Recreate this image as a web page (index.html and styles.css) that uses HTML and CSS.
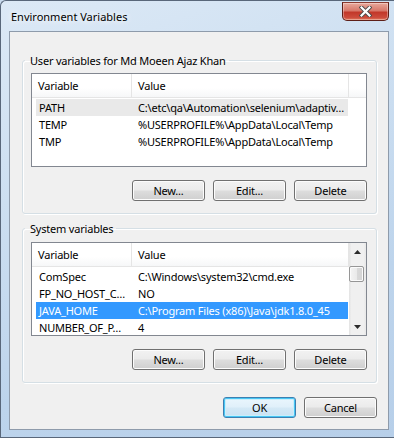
FILE: index.html
```html
<!DOCTYPE html>
<html lang="en">
<head>
<meta charset="UTF-8" />
<title>Environment Variables</title>
<link rel="stylesheet" href="styles.css">
</head>
<body>
<div class="window">
  <!-- Title bar -->
  <div class="titlebar">
    <span class="title">Environment Variables</span>
    <button class="close" title="Close">
      <svg width="13" height="11" viewBox="0 0 13 11">
        <path d="M2.5 1.5 L10.5 9.5 M10.5 1.5 L2.5 9.5" stroke="#4a4a4a" stroke-width="4" stroke-linecap="square"/>
        <path d="M2.5 1.5 L10.5 9.5 M10.5 1.5 L2.5 9.5" stroke="#ffffff" stroke-width="2.2" stroke-linecap="square"/>
      </svg>
    </button>
  </div>

  <!-- Client area -->
  <div class="client">
    <fieldset class="group group-user">
      <legend>User variables for Md Moeen Ajaz Khan</legend>
      <div class="list">
        <div class="list-main">
          <div class="list-head">
            <span class="head-var">Variable</span>
            <span class="head-val">Value</span>
          </div>
          <div class="rows">
            <div class="row hover"><span class="cell-var">PATH</span><span class="cell-val">C:\etc\qa\Automation\selenium\adaptiv…</span></div>
            <div class="row"><span class="cell-var">TEMP</span><span class="cell-val">%USERPROFILE%\AppData\Local\Temp</span></div>
            <div class="row"><span class="cell-var">TMP</span><span class="cell-val">%USERPROFILE%\AppData\Local\Temp</span></div>
          </div>
        </div>
      </div>
      <div class="buttons">
        <button class="btn">New...</button>
        <button class="btn">Edit...</button>
        <button class="btn">Delete</button>
      </div>
    </fieldset>

    <fieldset class="group group-system">
      <legend>System variables</legend>
      <div class="list">
        <div class="list-main">
          <div class="list-head">
            <span class="head-var">Variable</span>
            <span class="head-val">Value</span>
          </div>
          <div class="rows">
            <div class="row"><span class="cell-var">ComSpec</span><span class="cell-val">C:\Windows\system32\cmd.exe</span></div>
            <div class="row"><span class="cell-var">FP_NO_HOST_C…</span><span class="cell-val">NO</span></div>
            <div class="row selected"><span class="cell-var">JAVA_HOME</span><span class="cell-val">C:\Program Files (x86)\Java\jdk1.8.0_45</span></div>
            <div class="row"><span class="cell-var">NUMBER_OF_P…</span><span class="cell-val">4</span></div>
          </div>
        </div>
        <div class="scrollbar">
          <div class="arrow">
            <svg width="7" height="4" viewBox="0 0 7 4"><path d="M3.5 0 L7 4 L0 4 Z" fill="#2b2b2b"/></svg>
          </div>
          <div class="track">
            <div class="thumb"></div>
          </div>
          <div class="arrow">
            <svg width="7" height="4" viewBox="0 0 7 4"><path d="M0 0 L7 0 L3.5 4 Z" fill="#2b2b2b"/></svg>
          </div>
        </div>
      </div>
      <div class="buttons">
        <button class="btn">New...</button>
        <button class="btn">Edit...</button>
        <button class="btn">Delete</button>
      </div>
    </fieldset>

    <div class="dialog-buttons">
      <button class="btn default">OK</button>
      <button class="btn">Cancel</button>
    </div>
  </div>
</div>
</body>
</html>
```

FILE: styles.css
```css
body {
  margin: 0;
  font-family: "Noto Sans", sans-serif;
  font-size: 11px;
  letter-spacing: -0.2px;
  color: #000;
  background: #c9dbee;
}
.window {
  width: 394px;
  height: 438px;
  box-sizing: border-box;
  border: 1px solid #59677a;
  border-right: none;
  border-radius: 6px 0 0 0;
  padding: 0 5px 7px 8px;
  background: linear-gradient(160deg, #dce9f6 0%, #cddff1 35%, #bdd4ec 70%, #b7cfe9 100%);
}
.titlebar {
  height: 30px;
  display: flex;
  justify-content: space-between;
  align-items: flex-start;
}
.title {
  margin: 8px 0 0 2px;
  line-height: 15px;
  letter-spacing: 0;
  text-shadow: 0 0 6px #fff, 0 0 10px rgba(255,255,255,0.8);
}
.close {
  width: 47px;
  height: 19px;
  margin-top: 1px;
  padding: 0;
  border: 1px solid #5d1f18;
  border-top-color: #8a3a30;
  border-radius: 0 0 5px 5px;
  background: linear-gradient(#e9a99c 0%, #d7786a 45%, #c2382a 55%, #cc4b3c 85%, #e07a5c 100%);
  box-shadow: inset 0 0 0 1px rgba(255,255,255,0.35);
  display: flex;
  align-items: center;
  justify-content: center;
}
.close svg {
  display: block;
}
.client {
  height: 399px;
  box-sizing: border-box;
  border: 1px solid #8e9bab;
  background: #f0f0f0;
  padding: 0 11px 0 12px;
}

/* group boxes */
.group {
  margin: 0;
  border: 1px solid #d5dfe5;
  border-radius: 3px;
  box-shadow: inset 1px 1px 0 #fff, 1px 1px 0 #fff;
  padding: 5px 9px 12px 8px;
  width: 355px;
  box-sizing: border-box;
}
.group legend {
  padding: 0 3px 0 5px;
  margin-left: -6px;
  line-height: 15px;
}
.group-user {
  margin-top: 21px;
}
.group-system {
  margin-top: 7px;
  padding-top: 6px;
}

/* list views */
.list {
  height: 94px;
  box-sizing: border-box;
  border: 1px solid #828790;
  background: #fff;
  display: flex;
  overflow: hidden;
}
.list-main {
  flex: 1;
}
.list-head {
  display: flex;
  height: 23px;
  border-bottom: 1px solid #e5e5e5;
  background: linear-gradient(#fff 0%, #fff 60%, #f6f7f8 100%);
  line-height: 23px;
}
.head-var, .head-val {
  box-sizing: border-box;
  padding-left: 6px;
  border-right: 1px solid #e5e5e5;
}
.head-var {
  width: 100px;
}
.head-val {
  width: 217px;
}
.rows {
  padding-top: 1px;
}
.row {
  display: flex;
  width: 312px;
  height: 17px;
  margin-left: 4px;
  line-height: 17px;
  white-space: nowrap;
}
.row.hover {
  background: #e9e9e9;
}
.row.selected {
  background: #3399ff;
  color: #fff;
}
.cell-var {
  width: 96px;
  padding-left: 3px;
  box-sizing: border-box;
}
.cell-val {
  padding-left: 6px;
}

/* scrollbar */
.scrollbar {
  width: 17px;
  display: flex;
  flex-direction: column;
  background: linear-gradient(90deg, #e3e3e3 0%, #f0f0f0 15%, #f0f0f0 85%, #e8e8e8 100%);
}
.arrow {
  height: 17px;
  display: flex;
  align-items: center;
  justify-content: center;
}
.arrow svg {
  display: block;
}
.track {
  flex: 1;
}
.thumb {
  width: 15px;
  height: 16px;
  margin-top: 6px;
  box-sizing: border-box;
  border: 1px solid #969696;
  border-radius: 2px;
  background: linear-gradient(90deg, #f4f4f4 0%, #eaeaea 50%, #d9d9d9 51%, #d4d4d4 100%);
  box-shadow: inset 0 0 0 1px #fbfbfb;
}

/* buttons */
.buttons {
  display: flex;
  justify-content: flex-end;
  gap: 8px;
  margin-top: 13px;
}
.btn {
  width: 73px;
  height: 21px;
  padding: 0;
  font-family: "Noto Sans", sans-serif;
  font-size: 11px;
  letter-spacing: -0.2px;
  color: #000;
  border: 1px solid #707070;
  border-radius: 3px;
  background: linear-gradient(#f2f2f2 0%, #ebebeb 48%, #dddddd 52%, #cfcfcf 100%);
  box-shadow: inset 0 0 0 1px #fcfcfc;
}
.btn.default {
  border-color: #3c7fb1;
  box-shadow: inset 0 0 0 1px #48c6f4, inset 0 0 0 2px #c9eefb;
  background: linear-gradient(#eaf6fd 0%, #e0f0fa 48%, #d4e9f6 52%, #c9e1f2 100%);
}
.dialog-buttons {
  display: flex;
  justify-content: flex-end;
  gap: 8px;
  margin-top: 14px;
}
```
